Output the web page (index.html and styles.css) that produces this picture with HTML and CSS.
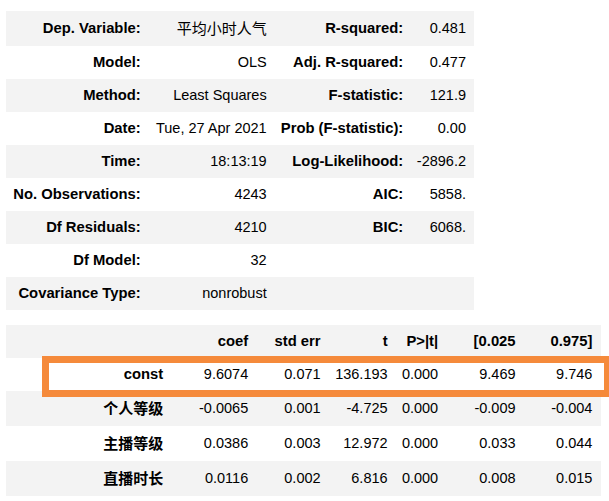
FILE: index.html
```html
<!DOCTYPE html>
<html>
<head>
<meta charset="utf-8">
<link rel="stylesheet" href="styles.css">
</head>
<body>
<div class="page">
  <table class="stats summary">
    <colgroup><col class="c1"><col class="c2"><col class="c3"><col class="c4"></colgroup>
    <tr class="odd r-first"><th>Dep. Variable:</th><td><span class="cjk">平均小时人气</span></td><th>R-squared:</th><td>0.481</td></tr>
    <tr><th>Model:</th><td>OLS</td><th>Adj. R-squared:</th><td>0.477</td></tr>
    <tr class="odd"><th>Method:</th><td>Least Squares</td><th>F-statistic:</th><td>121.9</td></tr>
    <tr><th>Date:</th><td>Tue, 27 Apr 2021</td><th>Prob (F-statistic):</th><td>0.00</td></tr>
    <tr class="odd"><th>Time:</th><td>18:13:19</td><th>Log-Likelihood:</th><td>-2896.2</td></tr>
    <tr><th>No. Observations:</th><td>4243</td><th>AIC:</th><td>5858.</td></tr>
    <tr class="odd"><th>Df Residuals:</th><td>4210</td><th>BIC:</th><td>6068.</td></tr>
    <tr><th>Df Model:</th><td>32</td><th></th><td></td></tr>
    <tr class="odd"><th>Covariance Type:</th><td>nonrobust</td><th></th><td></td></tr>
  </table>

  <div class="coef-wrap">
    <table class="stats coefs">
      <colgroup><col class="k1"><col class="k2"><col class="k3"><col class="k4"><col class="k5"><col class="k6"><col class="k7"></colgroup>
      <tr class="odd r-head"><th></th><th>coef</th><th>std err</th><th>t</th><th>P&gt;|t|</th><th>[0.025</th><th>0.975]</th></tr>
      <tr class="r-const"><th>const</th><td>9.6074</td><td>0.071</td><td>136.193</td><td>0.000</td><td>9.469</td><td>9.746</td></tr>
      <tr class="odd r-cjk"><th><span class="cjk">个人等级</span></th><td>-0.0065</td><td>0.001</td><td>-4.725</td><td>0.000</td><td>-0.009</td><td>-0.004</td></tr>
      <tr class="r-cjk2"><th><span class="cjk">主播等级</span></th><td>0.0386</td><td>0.003</td><td>12.972</td><td>0.000</td><td>0.033</td><td>0.044</td></tr>
      <tr class="odd r-cjk"><th><span class="cjk">直播时长</span></th><td>0.0116</td><td>0.002</td><td>6.816</td><td>0.000</td><td>0.008</td><td>0.015</td></tr>
    </table>
    <div class="highlight"></div>
  </div>
</div>
</body>
</html>
```
FILE: styles.css
```css
html, body {
  margin: 0;
  padding: 0;
  background: #ffffff;
  overflow: hidden;
}

.page {
  padding: 11px 0 0 6px;
  font-family: "Liberation Sans", Arial, sans-serif;
  font-size: 14.5px;
  color: #000000;
}

.stats {
  border-collapse: collapse;
  border-spacing: 0;
  table-layout: fixed;
}

.stats th,
.stats td {
  padding: 0 8px 0 0;
  text-align: right;
  vertical-align: middle;
  white-space: nowrap;
  line-height: 17px;
}

.stats th {
  font-weight: bold;
  font-size: 14.8px;
}

.stats td {
  font-weight: normal;
}

.stats tr {
  height: 33.1px;
}

.stats tr.odd {
  background: #f3f3f3;
}

.cjk {
  font-family: "Noto Sans CJK SC", "Microsoft YaHei", sans-serif;
  font-size: 15px;
  line-height: 17px;
}

/* summary table columns */
.summary {
  width: 468px;
}
.summary .c1 { width: 142.7px; }
.summary .c2 { width: 126px; }
.summary .c3 { width: 136.6px; }
.summary .c4 { width: 62.7px; }

.summary tr.r-first {
  height: 34.7px;
}

/* coefficient table */
.coef-wrap {
  position: relative;
  margin-top: 15px;
}

.coefs {
  width: 595px;
}
.coefs th,
.coefs td {
  padding-right: 8.6px;
}
.coefs .k1 { width: 165.8px; }
.coefs .k2 { width: 85px; }
.coefs .k3 { width: 72.4px; }
.coefs .k4 { width: 67px; }
.coefs .k5 { width: 50.6px; }
.coefs .k6 { width: 77.4px; }
.coefs .k7 { width: 76.8px; }

.coefs tr.r-head { height: 32.7px; }
.coefs tr.r-const { height: 33px; }
.coefs tr.r-cjk { height: 35.3px; }
.coefs tr.r-cjk2 { height: 34.7px; }

.highlight {
  position: absolute;
  left: 36px;
  top: 31px;
  width: 555px;
  height: 27px;
  border: 7px solid #f58a3b;
  pointer-events: none;
}
```
